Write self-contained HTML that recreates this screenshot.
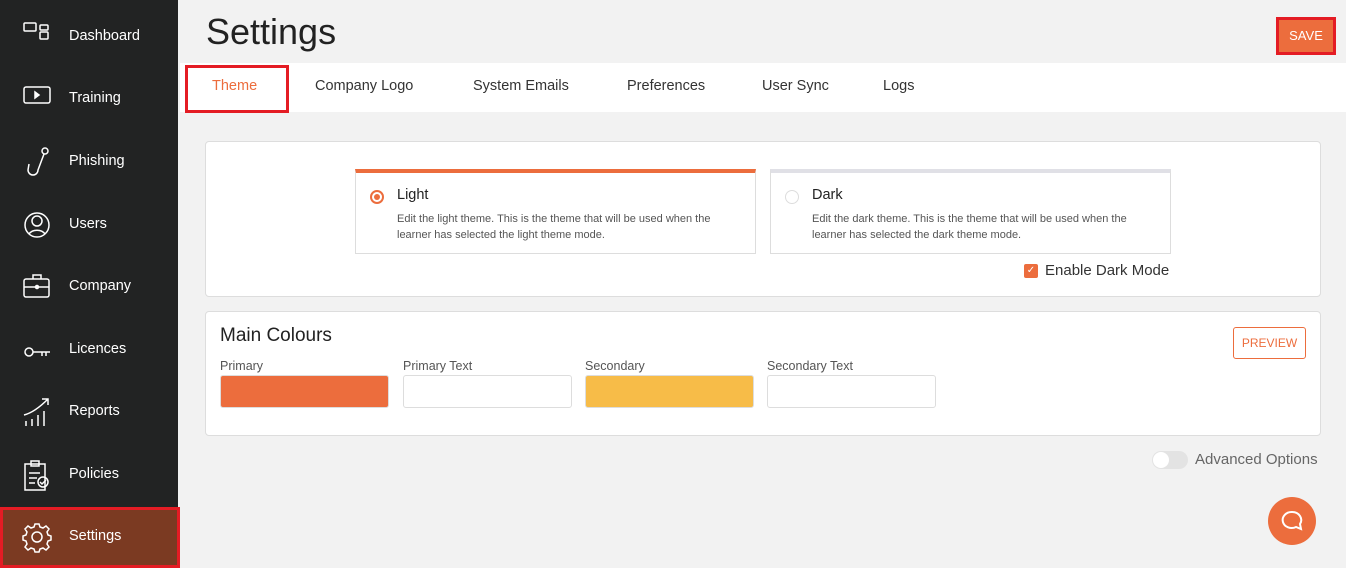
<!DOCTYPE html>
<html><head><meta charset="utf-8"><style>
*{box-sizing:border-box;margin:0;padding:0}
html,body{width:1346px;height:568px;overflow:hidden}
body{background:#f2f2f2;font-family:"Liberation Sans",sans-serif;position:relative;color:#222}
.sb{position:absolute;left:0;top:0;width:178px;height:568px;background:#222323}
.it{position:absolute;left:0;width:178px;height:62px;color:#fff;font-size:14.5px}
.it span{position:absolute;left:69px;top:0}
.it svg{position:absolute;left:22px;top:-8px}
.act{position:absolute;left:0;top:507px;width:180px;height:61px;border:3px solid #e41c24;background:#7b3a22}
.ab{position:absolute}
h1{position:absolute;left:206px;top:11px;font-size:36px;font-weight:normal;color:#222}
.save{position:absolute;left:1276px;top:17px;width:60px;height:38px;border:3px solid #e41c24;background:#ec6d3d;color:#fff;font-size:13px;text-align:center;line-height:32px}
.tabs{position:absolute;left:180px;top:63px;width:1166px;height:49px;background:#fff}
.tab{position:absolute;top:78px;font-size:14.5px;color:#333}
.card{position:absolute;background:#fff;border:1px solid #ddd;border-radius:4px}
.opt{position:absolute;background:#fff;border:1px solid #ddd}
.opt b{position:absolute;left:41px;top:14px;font-weight:normal;font-size:14.5px;color:#222}
.opt p{position:absolute;left:41px;top:38px;font-size:11px;line-height:16px;color:#555;width:345px}
.lbl{position:absolute;top:359px;font-size:12.5px;color:#555}
.sw{position:absolute;top:375px;width:169px;height:33px;border:1px solid #ddd;border-radius:3px}
</style></head><body>
<div class="sb"></div>
<div class="act"></div>
<div class="it" style="top:28px"><svg width="30" height="24" fill="none" stroke="#fff" stroke-width="1.5"><rect x="2" y="3" width="12" height="8" rx="1"/><rect x="18" y="5" width="8" height="5" rx="1"/><rect x="18" y="12" width="8" height="7" rx="1"/></svg><span>Dashboard</span></div>
<div class="it" style="top:90px"><svg width="30" height="24" fill="none" stroke="#fff" stroke-width="1.5"><rect x="2" y="5" width="26" height="16" rx="2"/><path d="M13 10l4 3-4 3z" fill="#fff"/></svg><span>Training</span></div>
<div class="it" style="top:153px"><svg width="30" height="34" fill="none" stroke="#fff" stroke-width="1.5"><circle cx="23" cy="6" r="3"/><path d="M22 9l-6 16a5 5 0 0 1-10 0l1-6"/></svg><span>Phishing</span></div>
<div class="it" style="top:216px"><svg width="30" height="34" fill="none" stroke="#fff" stroke-width="1.5"><circle cx="15" cy="17" r="12"/><circle cx="15" cy="13" r="5"/><path d="M7 26a9 7 0 0 1 16 0"/></svg><span>Users</span></div>
<div class="it" style="top:278px"><svg width="30" height="34" fill="none" stroke="#fff" stroke-width="1.5"><rect x="2" y="9" width="25" height="18" rx="2"/><path d="M11 9V5h8v4M2 17h25"/><circle cx="15" cy="17" r="1.5" fill="#fff"/></svg><span>Company</span></div>
<div class="it" style="top:341px"><svg width="30" height="34" fill="none" stroke="#fff" stroke-width="1.5"><circle cx="7" cy="19" r="4"/><path d="M11 19h17M20 19v4M24 19v4"/></svg><span>Licences</span></div>
<div class="it" style="top:403px"><svg width="30" height="34" fill="none" stroke="#fff" stroke-width="1.5"><path d="M2 20c8-2 16-8 24-16M20 4h6v6M4 26v5M10 24v7M16 20v11M22 16v15"/></svg><span>Reports</span></div>
<div class="it" style="top:466px"><svg width="30" height="34" fill="none" stroke="#fff" stroke-width="1.5"><rect x="3" y="6" width="20" height="26"/><rect x="9" y="3" width="8" height="5"/><path d="M7 15h11M7 20h8M7 25h6"/><circle cx="21" cy="24" r="5"/><path d="M18 24l2 2 4-4"/></svg><span>Policies</span></div>
<div class="it" style="top:528px"><svg width="30" height="34" fill="none" stroke="#fff" stroke-width="1.5"><circle cx="15" cy="17" r="5"/><path d="M13 4h4l1 3 3 1 3-2 3 3-2 3 1 3 3 1v4l-3 1-1 3 2 3-3 3-3-2-3 1-1 3h-4l-1-3-3-1-3 2-3-3 2-3-1-3-3-1v-4l3-1 1-3-2-3 3-3 3 2 3-1z"/></svg><span>Settings</span></div>

<h1>Settings</h1>
<div class="save">SAVE</div>
<div class="tabs"></div>
<div class="ab" style="left:185px;top:65px;width:104px;height:48px;border:3px solid #e41c24"></div>
<div class="tab" style="left:212px;color:#ec6d3d">Theme</div>
<div class="tab" style="left:315px">Company Logo</div>
<div class="tab" style="left:473px">System Emails</div>
<div class="tab" style="left:627px">Preferences</div>
<div class="tab" style="left:762px">User Sync</div>
<div class="tab" style="left:883px">Logs</div>

<div class="card" style="left:205px;top:141px;width:1116px;height:156px"></div>
<div class="opt" style="left:355px;top:169px;width:401px;height:85px;border-top:4px solid #ec6d3d">
<div class="ab" style="left:14px;top:17px;width:14px;height:14px;border-radius:50%;border:2px solid #ec6d3d"><div class="ab" style="left:2px;top:2px;width:6px;height:6px;border-radius:50%;background:#ec6d3d"></div></div>
<b>Light</b><p>Edit the light theme. This is the theme that will be used when the learner has selected the light theme mode.</p></div>
<div class="opt" style="left:770px;top:169px;width:401px;height:85px;border-top:4px solid #e0e0e6">
<div class="ab" style="left:14px;top:17px;width:14px;height:14px;border-radius:50%;border:1.5px solid #ddd"></div>
<b>Dark</b><p>Edit the dark theme. This is the theme that will be used when the learner has selected the dark theme mode.</p></div>
<div class="ab" style="left:1024px;top:264px;width:14px;height:14px;border-radius:2px;background:#ec6d3d;color:#fff;font-size:10px;text-align:center;line-height:14px">✓</div>
<div class="ab" style="left:1045px;top:262px;font-size:15px;color:#333">Enable Dark Mode</div>

<div class="card" style="left:205px;top:311px;width:1116px;height:125px"></div>
<div class="ab" style="left:220px;top:325px;font-size:19px;color:#222">Main Colours</div>
<div class="ab" style="left:1233px;top:327px;width:73px;height:32px;border:1px solid #ec6d3d;border-radius:3px;color:#ec6d3d;font-size:12px;text-align:center;line-height:30px">PREVIEW</div>
<div class="lbl" style="left:220px">Primary</div>
<div class="lbl" style="left:403px">Primary Text</div>
<div class="lbl" style="left:585px">Secondary</div>
<div class="lbl" style="left:767px">Secondary Text</div>
<div class="sw" style="left:220px;background:#ec6d3d"></div>
<div class="sw" style="left:403px;background:#fff"></div>
<div class="sw" style="left:585px;background:#f7bc48"></div>
<div class="sw" style="left:767px;background:#fff"></div>

<div class="ab" style="left:1152px;top:451px;width:36px;height:18px;border-radius:9px;background:#e3e3e3"><div class="ab" style="left:1px;top:1px;width:16px;height:16px;border-radius:50%;background:#fff"></div></div>
<div class="ab" style="left:1195px;top:451px;font-size:15px;color:#666">Advanced Options</div>
<div class="ab" style="left:1268px;top:497px;width:48px;height:48px;border-radius:50%;background:#ec6d3d"><svg width="48" height="48" fill="none" stroke="#fff" stroke-width="2"><path d="M24 15a9 8 0 1 0 4 15l5 2-1-5a9 8 0 0 0-8-12z"/></svg></div>
</body></html>
